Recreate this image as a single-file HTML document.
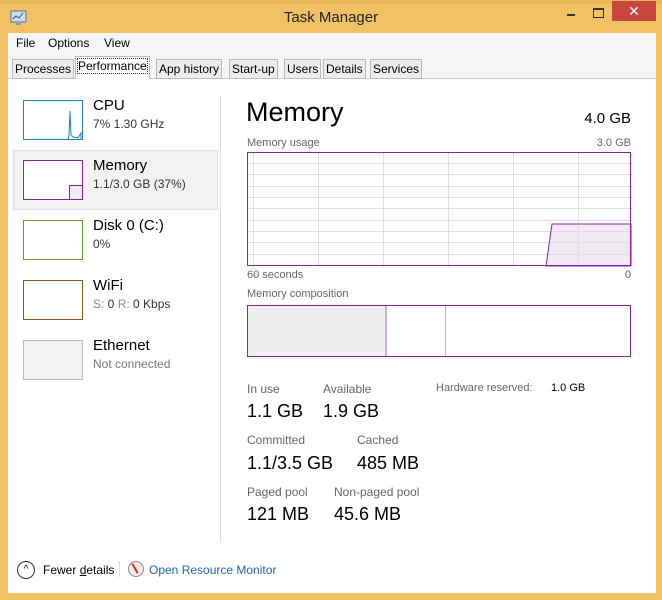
<!DOCTYPE html>
<html><head><style>
body{margin:0;width:662px;height:600px;background:#f1c264;font-family:"Liberation Sans",sans-serif;position:relative;overflow:hidden}
.a{position:absolute}
.t{position:absolute;white-space:nowrap}
</style></head><body>
<div class="a" style="left:0;top:0;width:662px;height:4px;background:#e9b65a"></div>
<div class="a" style="left:300;top:0"></div>
<div class="t" style="left:0;width:662px;top:9px;text-align:center;font-size:15px;color:#222">Task Manager</div>
<svg class="a" style="left:10px;top:10px" width="18" height="16"><rect x="1" y="1" width="15" height="11" fill="#cde" stroke="#579"/><polyline points="3,9 6,6 9,8 13,3" fill="none" stroke="#258" /><rect x="6" y="12" width="5" height="3" fill="#99a"/></svg>
<div class="a" style="left:567px;top:14px;width:8px;height:2px;background:#333"></div>
<div class="a" style="left:593px;top:8px;width:9px;height:7px;border:1px solid #333;border-top-width:2px"></div>
<div class="a" style="left:612px;top:1px;width:44px;height:20px;background:#c7463d;color:#fff;font-size:14px;text-align:center;line-height:20px">✕</div>
<div class="a" style="left:8px;top:33px;width:648px;height:560px;background:#fff"></div>
<div class="a" style="left:8px;top:33px;width:648px;height:22px;background:#f5f6f7"></div>
<div class="t" style="left:16px;top:36px;font-size:12px;color:#000">File</div>
<div class="t" style="left:48px;top:36px;font-size:12px;color:#000">Options</div>
<div class="t" style="left:104px;top:36px;font-size:12px;color:#000">View</div>
<div class="a" style="left:8px;top:55px;width:648px;height:23px;background:#f5f6f7;border-bottom:1px solid #ccc"></div>
<div class="t" style="left:12px;top:59px;height:18px;font-size:12px;line-height:18px;background:#ececec;border:1px solid #bbb;padding:0 2px">Processes</div>
<div class="t" style="left:75px;top:56px;height:22px;font-size:12px;line-height:19px;background:#fff;border:1px solid #bbb;border-bottom:none;padding:0 2px"><span style="outline:1px dotted #333">Performance</span></div>
<div class="t" style="left:156px;top:59px;height:18px;font-size:12px;line-height:18px;background:#ececec;border:1px solid #bbb;padding:0 2px">App history</div>
<div class="t" style="left:229px;top:59px;height:18px;font-size:12px;line-height:18px;background:#ececec;border:1px solid #bbb;padding:0 2px">Start-up</div>
<div class="t" style="left:284px;top:59px;height:18px;font-size:12px;line-height:18px;background:#ececec;border:1px solid #bbb;padding:0 2px">Users</div>
<div class="t" style="left:323px;top:59px;height:18px;font-size:12px;line-height:18px;background:#ececec;border:1px solid #bbb;padding:0 2px">Details</div>
<div class="t" style="left:370px;top:59px;height:18px;font-size:12px;line-height:18px;background:#ececec;border:1px solid #bbb;padding:0 2px">Services</div>
<!-- sidebar -->
<div class="a" style="left:220px;top:96px;width:1px;height:446px;background:#ddd"></div>
<div class="a" style="left:13px;top:150px;width:203px;height:58px;background:#f2f2f2;border:1px solid #e0e0e0"></div>
<div class="a" style="left:23px;top:100px;width:58px;height:38px;border:1px solid #1a85b4;background:#fff"></div>
<svg class="a" style="left:24px;top:101px" width="58" height="38"><polyline points="44,38 45,34 46,10 47,34 49,36 54,37 57,32 57,38" fill="none" stroke="#1a85b4"/></svg>
<div class="t" style="left:93px;top:97px;font-size:15px">CPU</div>
<div class="t" style="left:93px;top:117px;font-size:12px;color:#333">7% 1.30 GHz</div>
<div class="a" style="left:23px;top:160px;width:58px;height:38px;border:1px solid #8b1fa5;background:#fff"></div>
<div class="a" style="left:69px;top:185px;width:12px;height:13px;border-left:1px solid #8b1fa5;border-top:1px solid #8b1fa5;background:#f1edf2"></div>
<div class="t" style="left:93px;top:157px;font-size:15px">Memory</div>
<div class="t" style="left:93px;top:177px;font-size:12px;color:#333">1.1/3.0 GB (37%)</div>
<div class="a" style="left:23px;top:220px;width:58px;height:38px;border:1px solid #5ea12d;background:#fff"></div>
<div class="t" style="left:93px;top:217px;font-size:15px">Disk 0 (C:)</div>
<div class="t" style="left:93px;top:237px;font-size:12px;color:#333">0%</div>
<div class="a" style="left:23px;top:280px;width:58px;height:38px;border:1px solid #8c5a1c;background:#fff"></div>
<div class="t" style="left:93px;top:277px;font-size:15px">WiFi</div>
<div class="t" style="left:93px;top:297px;font-size:12px;color:#333"><span style="color:#888">S:</span> 0 <span style="color:#888">R:</span> 0 Kbps</div>
<div class="a" style="left:23px;top:340px;width:58px;height:38px;border:1px solid #bbb;background:#f2f2f2"></div>
<div class="t" style="left:93px;top:337px;font-size:15px">Ethernet</div>
<div class="t" style="left:93px;top:357px;font-size:12px;color:#777">Not connected</div>
<!-- main -->
<div class="t" style="left:246px;top:97px;font-size:27px">Memory</div>
<div class="t" style="right:31px;top:110px;font-size:15px">4.0 GB</div>
<div class="t" style="left:247px;top:137px;font-size:11px;color:#666">Memory usage</div>
<div class="t" style="right:31px;top:137px;font-size:11px;color:#666">3.0 GB</div>
<svg class="a" style="left:247px;top:152px" width="385" height="115">
<g stroke="#e4dde8" stroke-width="1">
<line x1="0" y1="11.5" x2="385" y2="11.5"/><line x1="0" y1="22.5" x2="385" y2="22.5"/><line x1="0" y1="34.5" x2="385" y2="34.5"/><line x1="0" y1="45.5" x2="385" y2="45.5"/><line x1="0" y1="56.5" x2="385" y2="56.5"/><line x1="0" y1="68.5" x2="385" y2="68.5"/><line x1="0" y1="79.5" x2="385" y2="79.5"/><line x1="0" y1="90.5" x2="385" y2="90.5"/><line x1="0" y1="102.5" x2="385" y2="102.5"/>
<line x1="6.5" y1="0" x2="6.5" y2="115"/><line x1="71.5" y1="0" x2="71.5" y2="115"/><line x1="136.5" y1="0" x2="136.5" y2="115"/><line x1="201.5" y1="0" x2="201.5" y2="115"/><line x1="266.5" y1="0" x2="266.5" y2="115"/><line x1="331.5" y1="0" x2="331.5" y2="115"/>
</g>
<polygon points="299,114 305,72 384,72 384,114" fill="rgba(230,222,233,0.6)" stroke="#8b1fa5"/>
<rect x="0.5" y="0.5" width="383" height="113" fill="none" stroke="#8b1fa5"/>
</svg>
<div class="t" style="left:247px;top:269px;font-size:11px;color:#666">60 seconds</div>
<div class="t" style="right:31px;top:269px;font-size:11px;color:#666">0</div>
<div class="t" style="left:247px;top:288px;font-size:11px;color:#666">Memory composition</div>
<div class="a" style="left:247px;top:305px;width:382px;height:50px;border:1px solid #8b1fa5;background:#fff"></div>
<div class="a" style="left:248px;top:306px;width:137px;height:50px;background:#f1eef2;border-right:2px solid #c9b3d0"></div>
<div class="a" style="left:445px;top:306px;width:1px;height:50px;background:#c9b3d0"></div>
<div class="t" style="left:247px;top:382px;font-size:12px;color:#666">In use</div>
<div class="t" style="left:323px;top:382px;font-size:12px;color:#666">Available</div>
<div class="t" style="left:436px;top:382px;font-size:11px;color:#666">Hardware reserved:</div>
<div class="t" style="left:551px;top:382px;font-size:11px;color:#000">1.0 GB</div>
<div class="t" style="left:247px;top:401px;font-size:18px">1.1 GB</div>
<div class="t" style="left:323px;top:401px;font-size:18px">1.9 GB</div>
<div class="t" style="left:247px;top:433px;font-size:12px;color:#666">Committed</div>
<div class="t" style="left:357px;top:433px;font-size:12px;color:#666">Cached</div>
<div class="t" style="left:247px;top:453px;font-size:18px">1.1/3.5 GB</div>
<div class="t" style="left:357px;top:453px;font-size:18px">485 MB</div>
<div class="t" style="left:247px;top:485px;font-size:12px;color:#666">Paged pool</div>
<div class="t" style="left:334px;top:485px;font-size:12px;color:#666">Non-paged pool</div>
<div class="t" style="left:247px;top:504px;font-size:18px">121 MB</div>
<div class="t" style="left:334px;top:504px;font-size:18px">45.6 MB</div>
<!-- footer -->
<div class="a" style="left:17px;top:561px;width:16px;height:16px;border:1px solid #333;border-radius:50%;font-size:10px;text-align:center;line-height:16px">^</div>
<div class="t" style="left:43px;top:563px;font-size:12px">Fewer <u>d</u>etails</div>
<div class="a" style="left:119px;top:561px;width:1px;height:16px;background:#ddd"></div>
<div class="a" style="left:128px;top:561px;width:14px;height:14px;border:1px solid #888;border-radius:50%;background:#f4e8e8"></div>
<div class="a" style="left:134px;top:563px;width:2px;height:11px;background:#c33;transform:rotate(-30deg)"></div>
<div class="t" style="left:149px;top:563px;font-size:12px;color:#1c66b0">Open Resource Monitor</div>
</body></html>
